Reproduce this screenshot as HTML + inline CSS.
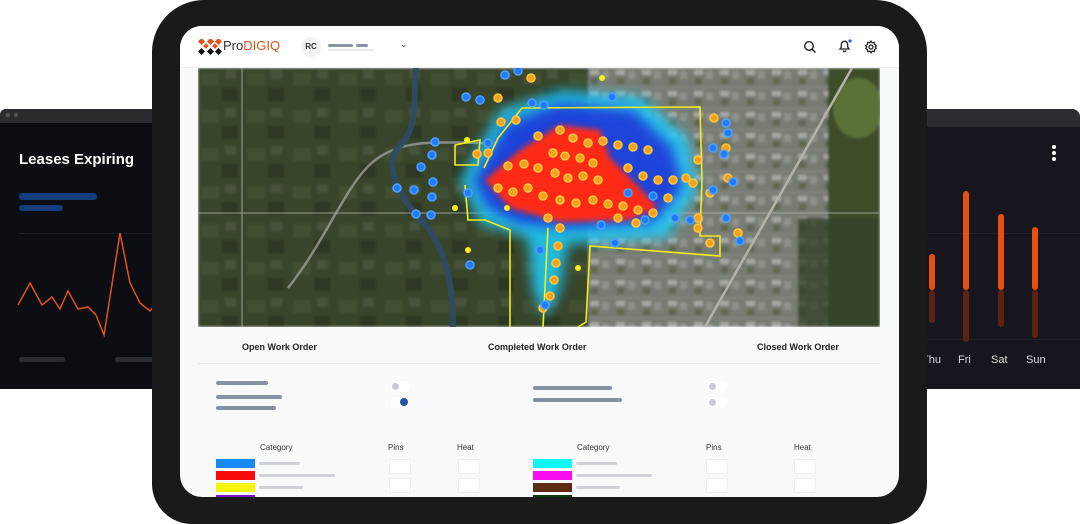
<!DOCTYPE html>
<html><head><meta charset="utf-8"><style>
*{margin:0;padding:0;box-sizing:border-box}
body{width:1080px;height:523px;background:#fff;position:relative;overflow:hidden;font-family:"Liberation Sans",sans-serif}
.abs{position:absolute}
.bar{position:absolute;border-radius:3px}
</style></head><body>
<!-- left panel -->
<div class="abs" style="left:0;top:109px;width:170px;height:280px;background:#0c0e13;border-radius:6px 0 0 0">
  <div style="height:14px;background:#2b2c30;border-radius:6px 0 0 0"></div>
  <div class="abs" style="left:6px;top:4px;width:4px;height:4px;border-radius:50%;background:#555"></div>
  <div class="abs" style="left:14px;top:4px;width:4px;height:4px;border-radius:50%;background:#555"></div>
  <div class="abs" style="left:19px;top:42px;color:#fff;font-size:15px;font-weight:bold">Leases Expiring</div>
  <div class="bar" style="left:19px;top:84px;width:78px;height:7px;background:#123c7a"></div>
  <div class="bar" style="left:19px;top:96px;width:44px;height:6px;background:#123c7a"></div>
  <div class="abs" style="left:19px;top:124px;width:140px;height:1px;background:#1c1f26"></div>
  <svg class="abs" style="left:0;top:110px" width="160" height="120"><polyline fill="none" stroke="#e2521c" stroke-width="1.5" points="18,86 30,64 42,86 52,78 60,90 68,72 78,90 88,88 96,96 104,116 110,78 120,14 130,64 140,84 150,92 155,86"/></svg>
  <div class="bar" style="left:19px;top:248px;width:46px;height:5px;background:#2a2c33"></div>
  <div class="bar" style="left:115px;top:248px;width:45px;height:5px;background:#2a2c33"></div>
</div>
<!-- right panel -->
<div class="abs" style="left:900px;top:109px;width:180px;height:280px;background:#17161f;border-radius:0 8px 0 0">
  <div style="height:18px;background:#2c2c32;border-radius:0 8px 0 0"></div>
  <div class="abs" style="left:152px;top:36px;width:4px;height:4px;border-radius:50%;background:#fff"></div>
  <div class="abs" style="left:152px;top:42px;width:4px;height:4px;border-radius:50%;background:#fff"></div>
  <div class="abs" style="left:152px;top:48px;width:4px;height:4px;border-radius:50%;background:#fff"></div>
  <div class="abs" style="left:0;top:124px;width:180px;height:1px;background:#23222c"></div>
  <div class="abs" style="left:0;top:230px;width:180px;height:1px;background:#23222c"></div>
</div>
<div class="bar" style="left:929px;top:254px;width:6px;height:36px;background:#e8500f"></div>
<div class="bar" style="left:929px;top:290px;width:6px;height:33px;background:#5a2312"></div>
<div class="bar" style="left:963px;top:191px;width:6px;height:99px;background:#e8500f"></div>
<div class="bar" style="left:963px;top:290px;width:6px;height:52px;background:#5a2312"></div>
<div class="bar" style="left:998px;top:214px;width:6px;height:76px;background:#e8500f"></div>
<div class="bar" style="left:998px;top:290px;width:6px;height:37px;background:#5a2312"></div>
<div class="bar" style="left:1032px;top:227px;width:6px;height:63px;background:#e8500f"></div>
<div class="bar" style="left:1032px;top:290px;width:6px;height:48px;background:#5a2312"></div>
<div class="abs" style="left:922px;top:354px;color:#ddd;font-size:11px">Thu</div>
<div class="abs" style="left:958px;top:354px;color:#ddd;font-size:11px">Fri</div>
<div class="abs" style="left:991px;top:354px;color:#ddd;font-size:11px">Sat</div>
<div class="abs" style="left:1026px;top:354px;color:#ddd;font-size:11px">Sun</div>
<!-- tablet -->
<div class="abs" style="left:152px;top:0;width:775px;height:524px;background:#1a1a1a;border-radius:52px 52px 40px 40px"></div>
<div class="abs" style="left:180px;top:26px;width:719px;height:471px;background:#f8f9fb;border-radius:22px;overflow:hidden">
  <div class="abs" style="left:0;top:0;width:719px;height:42px;background:#fff;border-bottom:1px solid #eceef1"></div>
  <svg class="abs" style="left:18px;top:13px" width="24" height="16">
    <g fill="#e8521a"><rect x="1" y="0" width="5" height="5" transform="rotate(45 3.5 2.5)"/><rect x="10" y="0" width="5" height="5" transform="rotate(45 12.5 2.5)"/><rect x="18" y="0" width="5" height="5" transform="rotate(45 20.5 2.5)"/></g>
    <g fill="#111"><rect x="1" y="10" width="5" height="5" transform="rotate(45 3.5 12.5)"/><rect x="10" y="10" width="5" height="5" transform="rotate(45 12.5 12.5)"/><rect x="18" y="10" width="5" height="5" transform="rotate(45 20.5 12.5)"/></g>
    <g fill="#e8521a"><rect x="6" y="5" width="4" height="4" transform="rotate(45 8 7)"/><rect x="15" y="5" width="4" height="4" transform="rotate(45 17 7)"/></g>
  </svg>
  <div class="abs" style="left:43px;top:12px;font-size:13px;color:#333">Pro<span style="color:#e8521a">DIGIQ</span></div>
  <div class="abs" style="left:121px;top:11px;width:20px;height:20px;border-radius:50%;background:#f1f2f5;font-size:8px;font-weight:bold;color:#333;text-align:center;line-height:20px">RC</div>
  <div class="bar" style="left:148px;top:18px;width:25px;height:3px;background:#8b94a3"></div>
  <div class="bar" style="left:176px;top:18px;width:12px;height:3px;background:#8b94a3"></div>
  <div class="bar" style="left:148px;top:23px;width:46px;height:2px;background:#e8eaee"></div>
  <div class="abs" style="left:220px;top:13px;font-size:9px;color:#444">⌄</div>
  <svg class="abs" style="left:623px;top:14px" width="14" height="14" fill="none" stroke="#222" stroke-width="1.4"><circle cx="6" cy="6" r="4.3"/><path d="M9.2 9.2 12.5 12.5"/></svg>
  <svg class="abs" style="left:657px;top:12px" width="16" height="16" fill="none" stroke="#222" stroke-width="1.3"><path d="M3 11h9l-1.3-2V6.5a3.2 3.2 0 0 0-6.4 0V9z M6 12.5a1.6 1.6 0 0 0 3 0"/><circle cx="13" cy="3" r="1.6" fill="#1f5fbf" stroke="none"/></svg>
  <svg class="abs" style="left:684px;top:14px" width="14" height="14" fill="none" stroke="#222" stroke-width="1.3"><circle cx="7" cy="7" r="2"/><path d="M7 1.2l1.2 1.6 2-.4.4 2 1.6 1.2-.9 1.4.9 1.4-1.6 1.2-.4 2-2-.4L7 12.8l-1.2-1.6-2 .4-.4-2L1.8 8.4l.9-1.4-.9-1.4 1.6-1.2.4-2 2 .4z"/></svg>
  <!-- map -->
  <svg class="abs" style="left:18px;top:42px" width="682" height="259">
    <defs>
      <filter id="b6"><feGaussianBlur stdDeviation="6"/></filter>
      <filter id="b3"><feGaussianBlur stdDeviation="3"/></filter>
      <filter id="b1"><feGaussianBlur stdDeviation="1.2"/></filter>
      <pattern id="urb" width="26" height="21" patternUnits="userSpaceOnUse">
        <rect width="26" height="21" fill="#777b72"/>
        <rect x="2" y="2" width="9" height="5" fill="#a7a9a3"/>
        <rect x="14" y="3" width="7" height="8" fill="#8f928b"/>
        <rect x="3" y="10" width="7" height="6" fill="#5d6650"/>
        <rect x="0" y="19" width="26" height="1" fill="#8a8c85"/>
      </pattern>
      <pattern id="frm" width="46" height="38" patternUnits="userSpaceOnUse">
        <rect width="46" height="38" fill="#37442a"/>
        <rect x="3" y="4" width="18" height="13" fill="#434f31"/>
        <rect x="24" y="20" width="16" height="13" fill="#2d3922"/>
        <rect x="27" y="2" width="11" height="9" fill="#48533a"/>
      </pattern>
    </defs>
    <g filter="url(#b1)">
      <rect width="682" height="259" fill="url(#frm)"/>
      <rect x="390" y="0" width="245" height="259" fill="url(#urb)"/>
      <rect x="630" y="0" width="52" height="259" fill="#3e4e2c"/>
      <rect x="600" y="150" width="82" height="109" fill="#35432a" opacity=".8"/>
      <ellipse cx="660" cy="40" rx="25" ry="30" fill="#66823d" opacity=".7"/>
    </g>
    <line x1="44" y1="0" x2="44" y2="259" stroke="#c8c8c0" stroke-width="1" opacity=".7"/>
    <line x1="0" y1="145" x2="682" y2="145" stroke="#a9a89c" stroke-width="1.5" opacity=".6"/>
    <path d="M90 220 C130 170 150 110 180 90 C210 70 240 75 300 75" stroke="#9e9f97" stroke-width="2.5" fill="none" opacity=".8"/>
    <path d="M218 0 C215 40 220 60 200 80 C185 95 200 130 230 160 C250 190 255 220 255 259" stroke="#2f4a66" stroke-width="6" fill="none" opacity=".9"/>
    <path d="M654 0 L507 259" stroke="#b5b3a8" stroke-width="2.5" fill="none"/>
    <!-- heat -->
    <path filter="url(#b6)" fill="#1ad0ff" opacity=".85" d="M262 112 L302 42 L362 22 L442 28 L490 70 L500 120 L470 170 L370 176 L362 222 L347 250 L335 222 L330 170 L282 155 Z"/>
    <path filter="url(#b6)" fill="#1c2fd8" opacity=".85" d="M275 112 L310 55 L362 35 L435 42 L475 80 L485 120 L455 155 L370 160 L320 155 L290 140 Z"/>
    <path filter="url(#b3)" fill="#ff2a14" d="M287 112 L322 82 L362 57 L402 62 L412 90 L442 120 L460 140 L430 152 L362 154 L312 140 Z"/>
    <!-- yellow boundaries -->
    <g fill="none" stroke="#f3ec1e" stroke-width="1.6">
      <path d="M324 40 L502 39 L504 112 L502 168 L522 168 L522 188 L392 178 L388 254 L380 259"/>
      <path d="M267 117 L270 152 L287 152 L312 162 L312 259"/>
      <path d="M257 77 L282 72 L280 97 L257 97 Z"/>
      <path d="M324 40 L300 70 L286 100"/>
      <path d="M350 160 L345 259"/>
    </g>
    <!-- orange dots -->
    <g fill="#f4a21c" stroke="#ffc640" stroke-width="1.5">
      <circle cx="279" cy="86" r="4"/><circle cx="290" cy="85" r="4"/><circle cx="303" cy="54" r="4"/><circle cx="318" cy="52" r="4"/><circle cx="333" cy="10" r="4"/><circle cx="300" cy="30" r="4"/>
      <circle cx="362" cy="62" r="4"/><circle cx="375" cy="70" r="4"/><circle cx="390" cy="75" r="4"/><circle cx="405" cy="73" r="4"/><circle cx="420" cy="77" r="4"/><circle cx="435" cy="79" r="4"/><circle cx="450" cy="82" r="4"/>
      <circle cx="340" cy="68" r="4"/><circle cx="355" cy="85" r="4"/><circle cx="367" cy="88" r="4"/><circle cx="382" cy="90" r="4"/><circle cx="395" cy="95" r="4"/>
      <circle cx="310" cy="98" r="4"/><circle cx="326" cy="96" r="4"/><circle cx="340" cy="100" r="4"/><circle cx="357" cy="105" r="4"/><circle cx="370" cy="110" r="4"/><circle cx="385" cy="108" r="4"/><circle cx="400" cy="112" r="4"/>
      <circle cx="300" cy="120" r="4"/><circle cx="315" cy="124" r="4"/><circle cx="330" cy="120" r="4"/><circle cx="345" cy="128" r="4"/><circle cx="362" cy="132" r="4"/><circle cx="378" cy="135" r="4"/><circle cx="395" cy="132" r="4"/><circle cx="410" cy="136" r="4"/><circle cx="425" cy="138" r="4"/><circle cx="440" cy="142" r="4"/><circle cx="455" cy="145" r="4"/>
      <circle cx="430" cy="100" r="4"/><circle cx="445" cy="108" r="4"/><circle cx="460" cy="112" r="4"/><circle cx="475" cy="112" r="4"/><circle cx="488" cy="110" r="4"/><circle cx="470" cy="130" r="4"/>
      <circle cx="350" cy="150" r="4"/><circle cx="362" cy="160" r="4"/><circle cx="360" cy="178" r="4"/><circle cx="358" cy="195" r="4"/><circle cx="356" cy="212" r="4"/><circle cx="352" cy="228" r="4"/><circle cx="345" cy="240" r="4"/>
      <circle cx="420" cy="150" r="4"/><circle cx="438" cy="155" r="4"/><circle cx="500" cy="92" r="4"/><circle cx="495" cy="115" r="4"/><circle cx="512" cy="125" r="4"/><circle cx="500" cy="150" r="4"/><circle cx="500" cy="160" r="4"/><circle cx="512" cy="175" r="4"/><circle cx="530" cy="110" r="4"/><circle cx="528" cy="80" r="4"/><circle cx="516" cy="50" r="4"/><circle cx="540" cy="165" r="4"/>
    </g>
    <!-- blue dots -->
    <g fill="#1f7cff" stroke="#4ea1ff" stroke-width="1.5">
      <circle cx="307" cy="7" r="4"/><circle cx="320" cy="3" r="4"/><circle cx="268" cy="29" r="4"/><circle cx="282" cy="32" r="4"/><circle cx="334" cy="35" r="4"/><circle cx="414" cy="29" r="4"/><circle cx="346" cy="37" r="4"/><circle cx="290" cy="75" r="4"/>
      <circle cx="237" cy="74" r="4"/><circle cx="234" cy="87" r="4"/><circle cx="223" cy="99" r="4"/><circle cx="235" cy="114" r="4"/><circle cx="234" cy="129" r="4"/><circle cx="216" cy="122" r="4"/><circle cx="199" cy="120" r="4"/><circle cx="218" cy="146" r="4"/><circle cx="233" cy="147" r="4"/><circle cx="272" cy="197" r="4"/><circle cx="270" cy="125" r="4"/>
      <circle cx="403" cy="157" r="4"/><circle cx="447" cy="152" r="4"/><circle cx="477" cy="150" r="4"/><circle cx="492" cy="152" r="4"/><circle cx="528" cy="55" r="4"/><circle cx="535" cy="114" r="4"/><circle cx="526" cy="86" r="4"/><circle cx="515" cy="122" r="4"/><circle cx="528" cy="150" r="4"/><circle cx="515" cy="80" r="4"/><circle cx="542" cy="173" r="4"/><circle cx="530" cy="65" r="4"/><circle cx="417" cy="175" r="4"/><circle cx="347" cy="237" r="4"/><circle cx="342" cy="182" r="4"/><circle cx="430" cy="125" r="4"/><circle cx="455" cy="128" r="4"/>
    </g>
    <g fill="#f7ee1e"><circle cx="404" cy="10" r="3"/><circle cx="269" cy="72" r="3"/><circle cx="257" cy="140" r="3"/><circle cx="309" cy="140" r="3"/><circle cx="270" cy="182" r="3"/><circle cx="380" cy="200" r="3"/></g>
  </svg>
  <!-- lower -->
  <div class="abs" style="left:62px;top:316px;font-size:9px;font-weight:bold;color:#222">Open Work Order</div>
  <div class="abs" style="left:308px;top:316px;font-size:9px;font-weight:bold;color:#222">Completed Work Order</div>
  <div class="abs" style="left:577px;top:316px;font-size:9px;font-weight:bold;color:#222">Closed Work Order</div>
  <div class="abs" style="left:18px;top:337px;width:682px;height:1px;background:#e6e8ec"></div>
  <div class="bar" style="left:36px;top:355px;width:52px;height:4px;background:#8791a1"></div>
  <div class="bar" style="left:36px;top:369px;width:66px;height:4px;background:#8791a1"></div>
  <div class="bar" style="left:36px;top:380px;width:60px;height:4px;background:#8791a1"></div>
  <div class="abs" style="left:210px;top:355px;width:20px;height:11px;border-radius:6px;background:#fff"></div><div class="abs" style="left:212px;top:357px;width:7px;height:7px;border-radius:50%;background:#c8ccd4"></div>
  <div class="abs" style="left:210px;top:371px;width:20px;height:11px;border-radius:6px;background:#fff"></div><div class="abs" style="left:220px;top:372px;width:8px;height:8px;border-radius:50%;background:#1e55a4"></div>
  <div class="bar" style="left:353px;top:360px;width:79px;height:4px;background:#8791a1"></div>
  <div class="bar" style="left:353px;top:372px;width:89px;height:4px;background:#8791a1"></div>
  <div class="abs" style="left:527px;top:355px;width:20px;height:11px;border-radius:6px;background:#fff"></div><div class="abs" style="left:529px;top:357px;width:7px;height:7px;border-radius:50%;background:#c8ccd4"></div>
  <div class="abs" style="left:527px;top:371px;width:20px;height:11px;border-radius:6px;background:#fff"></div><div class="abs" style="left:529px;top:373px;width:7px;height:7px;border-radius:50%;background:#c8ccd4"></div>
  <div class="abs" style="left:80px;top:417px;font-size:8px;color:#333">Category</div>
  <div class="abs" style="left:208px;top:417px;font-size:8px;color:#333">Pins</div>
  <div class="abs" style="left:277px;top:417px;font-size:8px;color:#333">Heat</div>
  <div class="abs" style="left:397px;top:417px;font-size:8px;color:#333">Category</div>
  <div class="abs" style="left:526px;top:417px;font-size:8px;color:#333">Pins</div>
  <div class="abs" style="left:614px;top:417px;font-size:8px;color:#333">Heat</div>
  <div class="abs" style="left:36px;top:433px;width:39px;height:9px;background:#1689f5"></div>
  <div class="abs" style="left:36px;top:445px;width:39px;height:9px;background:#f80b0b"></div>
  <div class="abs" style="left:36px;top:457px;width:39px;height:9px;background:#f6f603"></div>
  <div class="abs" style="left:36px;top:469px;width:39px;height:9px;background:#7a14c8"></div>
  <div class="bar" style="left:79px;top:436px;width:41px;height:3px;background:#cfd2d8"></div>
  <div class="bar" style="left:79px;top:448px;width:76px;height:3px;background:#cfd2d8"></div>
  <div class="bar" style="left:79px;top:460px;width:44px;height:3px;background:#cfd2d8"></div>
  <div class="abs" style="left:353px;top:433px;width:39px;height:9px;background:#0ff6f6"></div>
  <div class="abs" style="left:353px;top:445px;width:39px;height:9px;background:#f60ef0"></div>
  <div class="abs" style="left:353px;top:457px;width:39px;height:9px;background:#5e2a12"></div>
  <div class="abs" style="left:353px;top:469px;width:39px;height:9px;background:#0d3a12"></div>
  <div class="bar" style="left:396px;top:436px;width:41px;height:3px;background:#cfd2d8"></div>
  <div class="bar" style="left:396px;top:448px;width:76px;height:3px;background:#cfd2d8"></div>
  <div class="bar" style="left:396px;top:460px;width:44px;height:3px;background:#cfd2d8"></div>
  <div class="abs" style="left:209px;top:433px;width:22px;height:15px;border:1px solid #eceef1;background:#fff"></div>
  <div class="abs" style="left:209px;top:452px;width:22px;height:15px;border:1px solid #eceef1;background:#fff"></div>
  <div class="abs" style="left:278px;top:433px;width:22px;height:15px;border:1px solid #eceef1;background:#fff"></div>
  <div class="abs" style="left:278px;top:452px;width:22px;height:15px;border:1px solid #eceef1;background:#fff"></div>
  <div class="abs" style="left:526px;top:433px;width:22px;height:15px;border:1px solid #eceef1;background:#fff"></div>
  <div class="abs" style="left:526px;top:452px;width:22px;height:15px;border:1px solid #eceef1;background:#fff"></div>
  <div class="abs" style="left:614px;top:433px;width:22px;height:15px;border:1px solid #eceef1;background:#fff"></div>
  <div class="abs" style="left:614px;top:452px;width:22px;height:15px;border:1px solid #eceef1;background:#fff"></div>
</div>
</body></html>
